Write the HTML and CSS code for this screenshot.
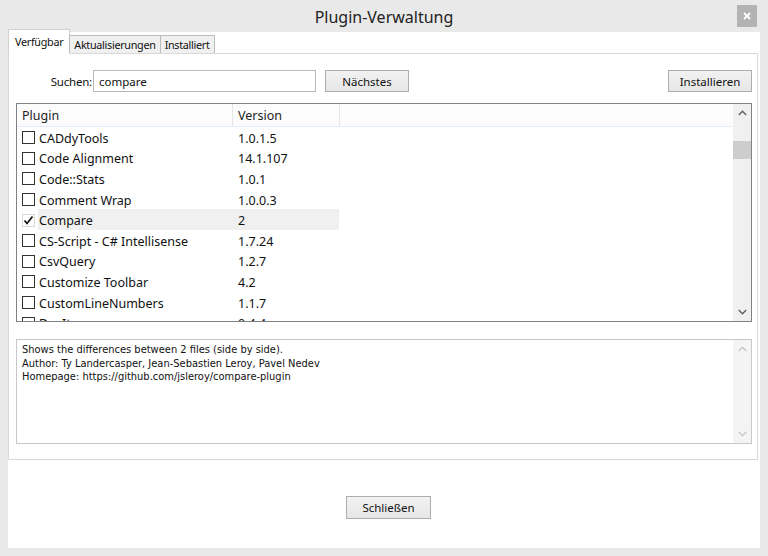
FILE: index.html
```html
<!DOCTYPE html>
<html>
<head>
<meta charset="utf-8">
<link rel="stylesheet" href="styles.css">
</head>
<body>
<div class="window">
  <div class="titlebar">
    <div class="title">Plugin-Verwaltung</div>
    <div class="close"><svg width="8" height="8" viewBox="0 0 8 8"><path d="M1 1L7 7M7 1L1 7" stroke="#fff" stroke-width="1.8"/></svg></div>
  </div>
  <div class="client">
    <div class="tabs">
      <div class="tab active">Verfügbar</div>
      <div class="tab">Aktualisierungen</div>
      <div class="tab">Installiert</div>
    </div>
    <div class="panel">
      <div class="searchrow">
        <label class="slabel">Suchen:</label>
        <div class="input">compare</div>
        <div class="btn next">Nächstes</div>
        <div class="spacer"></div>
        <div class="btn install">Installieren</div>
      </div>
      <div class="list">
        <div class="listbody">
          <div class="header">
            <div class="hcol c1">Plugin</div>
            <div class="hcol c2">Version</div>
            <div class="hcol c3"></div>
          </div>
          <div class="row"><span class="cb"></span><span class="name">CADdyTools</span><span class="ver">1.0.1.5</span></div>
          <div class="row"><span class="cb"></span><span class="name">Code Alignment</span><span class="ver">14.1.107</span></div>
          <div class="row"><span class="cb"></span><span class="name">Code::Stats</span><span class="ver">1.0.1</span></div>
          <div class="row"><span class="cb"></span><span class="name">Comment Wrap</span><span class="ver">1.0.0.3</span></div>
          <div class="row"><span class="cb checked"><svg width="11" height="11" viewBox="0 0 11 11"><path d="M1.5 5.5L4 8.5L9.5 1.5" fill="none" stroke="#111" stroke-width="1.7"/></svg></span><span class="name hl">Compare</span><span class="ver hl">2</span></div>
          <div class="row"><span class="cb"></span><span class="name">CS-Script - C# Intellisense</span><span class="ver">1.7.24</span></div>
          <div class="row"><span class="cb"></span><span class="name">CsvQuery</span><span class="ver">1.2.7</span></div>
          <div class="row"><span class="cb"></span><span class="name">Customize Toolbar</span><span class="ver">4.2</span></div>
          <div class="row"><span class="cb"></span><span class="name">CustomLineNumbers</span><span class="ver">1.1.7</span></div>
          <div class="row"><span class="cb"></span><span class="name">DoxIt</span><span class="ver">0.4.4</span></div>
        </div>
        <div class="vscroll">
          <div class="arrow"><svg width="9" height="6" viewBox="0 0 9 6"><path d="M0.8 5L4.5 1.3L8.2 5" fill="none" stroke="#606060" stroke-width="1.4"/></svg></div>
          <div class="track"><div class="thumb"></div></div>
          <div class="arrow"><svg width="9" height="6" viewBox="0 0 9 6"><path d="M0.8 1L4.5 4.7L8.2 1" fill="none" stroke="#606060" stroke-width="1.4"/></svg></div>
        </div>
      </div>
      <div class="desc">
        <div class="desctext">Shows the differences between 2 files (side by side).<br>Author: Ty Landercasper, Jean-Sebastien Leroy, Pavel Nedev<br>Homepage: https://github.com/jsleroy/compare-plugin</div>
        <div class="vscroll dis">
          <div class="arrow"><svg width="9" height="6" viewBox="0 0 9 6"><path d="M0.8 5L4.5 1.3L8.2 5" fill="none" stroke="#c4c4c4" stroke-width="1.3"/></svg></div>
          <div class="track"></div>
          <div class="arrow"><svg width="9" height="6" viewBox="0 0 9 6"><path d="M0.8 1L4.5 4.7L8.2 1" fill="none" stroke="#c4c4c4" stroke-width="1.3"/></svg></div>
        </div>
      </div>
    </div>
    <div class="footer">
      <div class="btn closebtn">Schließen</div>
    </div>
  </div>
</div>
</body>
</html>
```
FILE: styles.css
```css
html, body {
  margin: 0;
  padding: 0;
}
body {
  width: 768px;
  height: 556px;
  background: #e9e9e9;
  font-family: "Noto Sans", "Open Sans", sans-serif;
  color: #000;
  overflow: hidden;
}
.window {
  width: 768px;
  height: 556px;
  display: flex;
  flex-direction: column;
}
.titlebar {
  height: 32px;
  display: flex;
  align-items: center;
  justify-content: center;
  position: relative;
}
.title {
  font-size: 16px;
  color: #222;
  margin-top: 1px;
}
.close {
  position: absolute;
  right: 11px;
  top: 5px;
  width: 20px;
  height: 22px;
  background: #b3b3b3;
  display: flex;
  align-items: center;
  justify-content: center;
}
.client {
  margin: 0 8px 8px 8px;
  height: 516px;
  background: #fff;
  display: flex;
  flex-direction: column;
}
.tabs {
  display: flex;
  height: 21px;
  align-items: flex-end;
  font-size: 10.8px;
  letter-spacing: -0.3px;
  position: relative;
  z-index: 1;
}
.tab {
  height: 17px;
  padding: 0 4px 0 4px;
  border: 1px solid #bcbcbc;
  border-bottom: none;
  background: #f0f0f0;
  display: flex;
  align-items: center;
  color: #111;
  margin-left: -1px;
}
.tab.active {
  background: #fff;
  padding: 0 6px 2px 6px;
  margin-left: 0;
  border-color: #d0d0d0;
  margin-bottom: -1px;
  height: 22px;
}
.panel {
  width: 750px;
  height: 407px;
  border: 1px solid #d9d9d9;
  display: flex;
  flex-direction: column;
  padding: 0 6px 0 7px;
  box-sizing: border-box;
}
.searchrow {
  display: flex;
  align-items: center;
  height: 22px;
  margin-top: 16px;
  font-size: 11.5px;
}
.slabel {
  width: 77px;
  text-align: right;
  padding-right: 1px;
  box-sizing: border-box;
  color: #111;
  letter-spacing: -0.2px;
}
.input {
  width: 223px;
  height: 22px;
  box-sizing: border-box;
  border: 1px solid #b9b9b9;
  padding: 0 5px;
  display: flex;
  align-items: center;
  color: #111;
}
.btn {
  height: 22px;
  box-sizing: border-box;
  border: 1px solid #adadad;
  background: linear-gradient(#f2f2f2, #e6e6e6);
  display: flex;
  align-items: center;
  justify-content: center;
  color: #111;
  font-size: 11.5px;
}
.next {
  width: 84px;
  margin-left: 9px;
}
.spacer {
  flex: 1;
}
.install {
  width: 84px;
  margin-right: -1px;
}
.list {
  margin-top: 11px;
  height: 219px;
  border: 1px solid #828282;
  box-sizing: border-box;
  display: flex;
  margin-right: -1px;
}
.listbody {
  flex: 1;
  overflow: hidden;
}
.header {
  height: 22px;
  display: flex;
  background: #fcfcfc;
  border-bottom: 1px solid #e3edf9;
  font-size: 12.5px;
}
.hcol {
  display: flex;
  align-items: center;
  padding: 1px 0 0 5px;
  box-sizing: border-box;
  color: #222;
  border-right: 1px solid #e6e6e6;
}
.c1 { width: 216px; }
.c2 { width: 107px; }
.c3 { flex: 1; border-right: none; }
.row {
  height: 20.6px;
  display: flex;
  align-items: center;
  font-size: 12.5px;
  color: #111;
}
.cb {
  width: 13px;
  height: 13px;
  box-sizing: border-box;
  border: 1px solid #333;
  background: #fff;
  margin-left: 5px;
  margin-right: 3px;
  margin-top: 1px;
  display: flex;
  align-items: center;
  justify-content: center;
  flex: none;
}
.cb.checked {
  border-color: #d8d8d8;
}
.name {
  width: 194px;
  height: 100%;
  display: flex;
  align-items: center;
  padding: 2px 0 0 1px;
  box-sizing: border-box;
}
.ver {
  width: 107px;
  height: 100%;
  display: flex;
  align-items: center;
  padding: 2px 0 0 6px;
  box-sizing: border-box;
}
.hl {
  background: #f0f0f0;
}
.vscroll {
  width: 18px;
  background: #f0f0f0;
  display: flex;
  flex-direction: column;
  flex: none;
}
.arrow {
  height: 18px;
  display: flex;
  align-items: center;
  justify-content: center;
}
.track {
  flex: 1;
}
.thumb {
  margin-top: 19px;
  height: 18px;
  background: #cdcdcd;
}
.desc {
  margin-top: 17px;
  height: 105px;
  border: 1px solid #c8c8c8;
  box-sizing: border-box;
  display: flex;
  margin-right: -1px;
}
.desctext {
  flex: 1;
  padding: 3px 5px;
  font-family: "DejaVu Sans Condensed", "DejaVu Sans", sans-serif;
  font-size: 11px;
  line-height: 13.5px;
  color: #111;
}
.vscroll.dis {
  background: #f4f4f4;
}
.footer {
  flex: 1;
  display: flex;
  justify-content: center;
  padding-top: 36px;
}
.closebtn {
  width: 85px;
  height: 23px;
  margin-left: 9px;
}
```
